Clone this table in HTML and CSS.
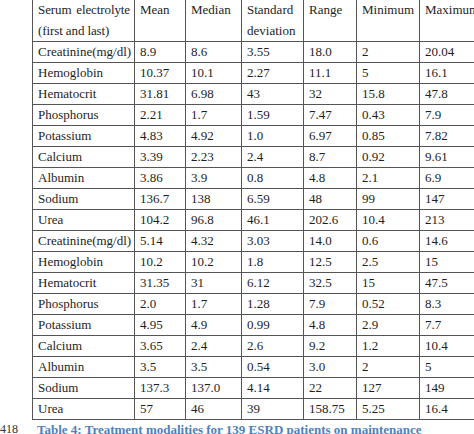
FILE: index.html
```html
<!DOCTYPE html>
<html>
<head>
<meta charset="utf-8">
<link rel="stylesheet" href="styles.css">
</head>
<body>
<div class="page">
  <table class="stats">
    <colgroup>
      <col class="c1"><col class="c2"><col class="c3"><col class="c4"><col class="c5"><col class="c6"><col class="c7">
    </colgroup>
    <thead>
      <tr class="head">
        <th class="just">Serum electrolyte (first and last)</th>
        <th>Mean</th>
        <th>Median</th>
        <th>Standard deviation</th>
        <th>Range</th>
        <th>Minimum</th>
        <th>Maximum</th>
      </tr>
    </thead>
    <tbody>
      <tr><td>Creatinine(mg/dl)</td><td>8.9</td><td>8.6</td><td>3.55</td><td>18.0</td><td>2</td><td>20.04</td></tr>
      <tr><td>Hemoglobin</td><td>10.37</td><td>10.1</td><td>2.27</td><td>11.1</td><td>5</td><td>16.1</td></tr>
      <tr><td>Hematocrit</td><td>31.81</td><td>6.98</td><td>43</td><td>32</td><td>15.8</td><td>47.8</td></tr>
      <tr><td>Phosphorus</td><td>2.21</td><td>1.7</td><td>1.59</td><td>7.47</td><td>0.43</td><td>7.9</td></tr>
      <tr><td>Potassium</td><td>4.83</td><td>4.92</td><td>1.0</td><td>6.97</td><td>0.85</td><td>7.82</td></tr>
      <tr><td>Calcium</td><td>3.39</td><td>2.23</td><td>2.4</td><td>8.7</td><td>0.92</td><td>9.61</td></tr>
      <tr><td>Albumin</td><td>3.86</td><td>3.9</td><td>0.8</td><td>4.8</td><td>2.1</td><td>6.9</td></tr>
      <tr><td>Sodium</td><td>136.7</td><td>138</td><td>6.59</td><td>48</td><td>99</td><td>147</td></tr>
      <tr><td>Urea</td><td>104.2</td><td>96.8</td><td>46.1</td><td>202.6</td><td>10.4</td><td>213</td></tr>
      <tr><td>Creatinine(mg/dl)</td><td>5.14</td><td>4.32</td><td>3.03</td><td>14.0</td><td>0.6</td><td>14.6</td></tr>
      <tr><td>Hemoglobin</td><td>10.2</td><td>10.2</td><td>1.8</td><td>12.5</td><td>2.5</td><td>15</td></tr>
      <tr><td>Hematocrit</td><td>31.35</td><td>31</td><td>6.12</td><td>32.5</td><td>15</td><td>47.5</td></tr>
      <tr><td>Phosphorus</td><td>2.0</td><td>1.7</td><td>1.28</td><td>7.9</td><td>0.52</td><td>8.3</td></tr>
      <tr><td>Potassium</td><td>4.95</td><td>4.9</td><td>0.99</td><td>4.8</td><td>2.9</td><td>7.7</td></tr>
      <tr><td>Calcium</td><td>3.65</td><td>2.4</td><td>2.6</td><td>9.2</td><td>1.2</td><td>10.4</td></tr>
      <tr><td>Albumin</td><td>3.5</td><td>3.5</td><td>0.54</td><td>3.0</td><td>2</td><td>5</td></tr>
      <tr><td>Sodium</td><td>137.3</td><td>137.0</td><td>4.14</td><td>22</td><td>127</td><td>149</td></tr>
      <tr><td>Urea</td><td>57</td><td>46</td><td>39</td><td>158.75</td><td>5.25</td><td>16.4</td></tr>
    </tbody>
  </table>
  <div class="caption-row">
    <span class="lineno">418</span>
    <span class="caption">Table 4: Treatment modalities for 139 ESRD patients on maintenance</span>
  </div>
</div>
</body>
</html>
```
FILE: styles.css
```css
html, body {
  margin: 0;
  padding: 0;
  overflow: hidden;
  background: #ffffff;
}
.page {
  width: 474px;
  height: 434px;
  overflow: hidden;
  font-family: "Liberation Serif", "DejaVu Serif", serif;
  color: #1e1e1e;
}
.stats {
  border-collapse: collapse;
  table-layout: fixed;
  width: 450px;
  margin-left: 32px;
  margin-top: -2px;
  font-size: 13px;
}
.c1 { width: 102px; }
.c2 { width: 51px; }
.c3 { width: 56px; }
.c4 { width: 62px; }
.c5 { width: 53px; }
.c6 { width: 63px; }
.c7 { width: 63px; }
.stats th, .stats td {
  border: 1px solid #555;
  padding: 0 0 0 5px;
  height: 20px;
  line-height: 20px;
  text-align: left;
  vertical-align: middle;
  font-weight: normal;
  white-space: nowrap;
  overflow: hidden;
}
.stats .head th {
  height: 41px;
  line-height: 21px;
  vertical-align: top;
  white-space: normal;
  padding-right: 2px;
}
.stats .head th.just {
  text-align: justify;
  padding-right: 4px;
  letter-spacing: -0.1px;
}
.caption-row {
  display: flex;
  align-items: center;
  height: 15px;
  margin-top: 2px;
}
.lineno {
  width: 37px;
  font-size: 12px;
  color: #333;
}
.caption {
  font-weight: bold;
  font-size: 13px;
  color: #4f81bd;
  white-space: nowrap;
}
```
